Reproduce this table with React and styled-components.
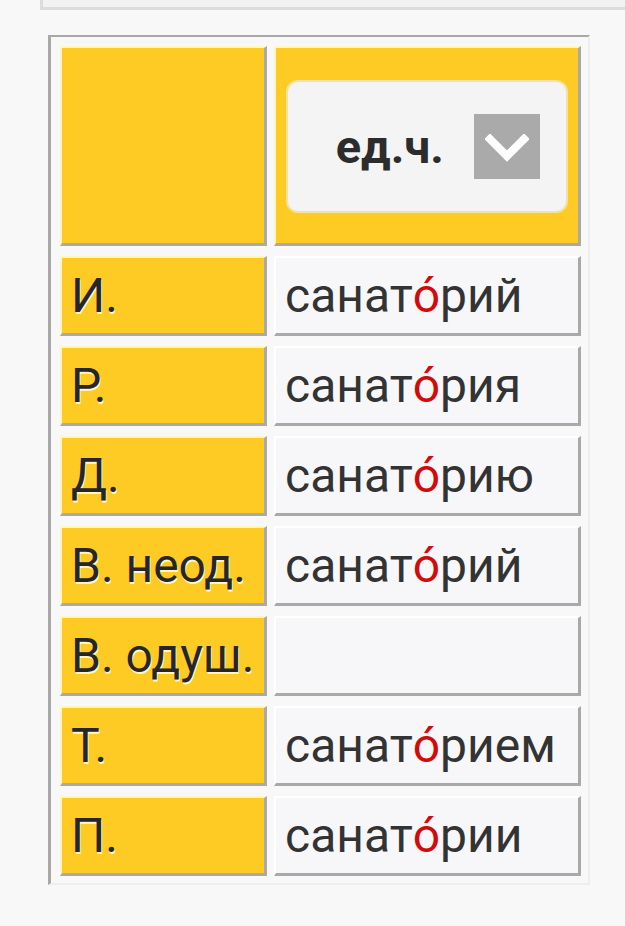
import styled, { createGlobalStyle } from "styled-components";

const GlobalStyle = createGlobalStyle`
  html, body {
    margin: 0;
    padding: 0;
    background: #f8f8f8;
    font-family: Roboto, "Liberation Sans", sans-serif;
  }
`;

const rows = [
  { label: "И.", stem: "санат", end: "рий" },
  { label: "Р.", stem: "санат", end: "рия" },
  { label: "Д.", stem: "санат", end: "рию" },
  { label: "В. неод.", stem: "санат", end: "рий" },
  { label: "В. одуш.", stem: "", end: "" },
  { label: "Т.", stem: "санат", end: "рием" },
  { label: "П.", stem: "санат", end: "рии" },
];

export default function App() {
  return (
    <Page>
      <GlobalStyle />
      <TopStrip />
      <Table>
        <Cell $head />
        <Cell $head $pad="0 10px">
          <Select>
            <SelectText>ед.ч.</SelectText>
            <Chevron>
              <svg width="44" height="28" viewBox="0 0 44 28">
                <path
                  d="M5 5 L22 22 L39 5"
                  fill="none"
                  stroke="#fff"
                  strokeWidth="8"
                  strokeLinecap="square"
                />
              </svg>
            </Chevron>
          </Select>
        </Cell>
        {rows.map((r) => (
          <Row key={r.label} {...r} />
        ))}
      </Table>
    </Page>
  );
}

function Row({ label, stem, end }) {
  return (
    <>
      <Cell $label>{label}</Cell>
      <Cell>
        {stem && (
          <>
            {stem}
            <Stress>о́</Stress>
            {end}
          </>
        )}
      </Cell>
    </>
  );
}

const Page = styled.div`
  width: 625px;
  height: 926px;
  overflow: hidden;
`;

const TopStrip = styled.div`
  margin-left: 40px;
  height: 7px;
  background: #f2f2f2;
  border-left: 3px solid #dcdcdc;
  border-bottom: 3px solid #dcdcdc;
`;

const Table = styled.div`
  margin: 25px 0 0 48px;
  width: 542px;
  box-sizing: border-box;
  padding: 9px 7px 7px 9px;
  border-style: solid;
  border-width: 2px 2px 2px 3px;
  border-color: #a8a8a8 #eeeeee #eeeeee #a8a8a8;
  display: grid;
  grid-template-columns: 207px 307px;
  grid-template-rows: 200px repeat(7, 80px);
  column-gap: 7px;
  row-gap: 10px;
`;

const Cell = styled.div`
  box-sizing: border-box;
  display: flex;
  align-items: center;
  padding: ${(p) => p.$pad || "0 0 0 9px"};
  background: ${(p) => (p.$head || p.$label ? "#fdcb23" : "#f7f7f9")};
  border-style: solid;
  border-width: 2px 3px 3px 2px;
  border-color: ${(p) =>
    p.$head || p.$label
      ? "#fff6c6 #a9a9a9 #a9a9a9 #fff6c6"
      : "#ffffff #a9a9a9 #a9a9a9 #ffffff"};
  font-size: 48px;
  color: ${(p) => (p.$label ? "#262626" : "#333333")};
  text-shadow: ${(p) => (p.$label ? "1px 2px 0 #fff6d0" : "none")};
  white-space: nowrap;
`;

const Stress = styled.span`
  color: #d20a0a;
`;

const Select = styled.div`
  flex: 1;
  height: 133px;
  margin-top: 2px;
  box-sizing: border-box;
  display: flex;
  align-items: center;
  justify-content: flex-end;
  gap: 30px;
  padding-right: 26px;
  background: #f4f4f5;
  border: 2px solid #f2e3a0;
  border-radius: 12px;
`;

const SelectText = styled.span`
  font-size: 47px;
  font-weight: 700;
  color: #2c2c2c;
`;

const Chevron = styled.div`
  width: 66px;
  height: 65px;
  background: #aaaaaa;
  display: flex;
  align-items: center;
  justify-content: center;
  padding-top: 3px;
  box-sizing: border-box;
`;
